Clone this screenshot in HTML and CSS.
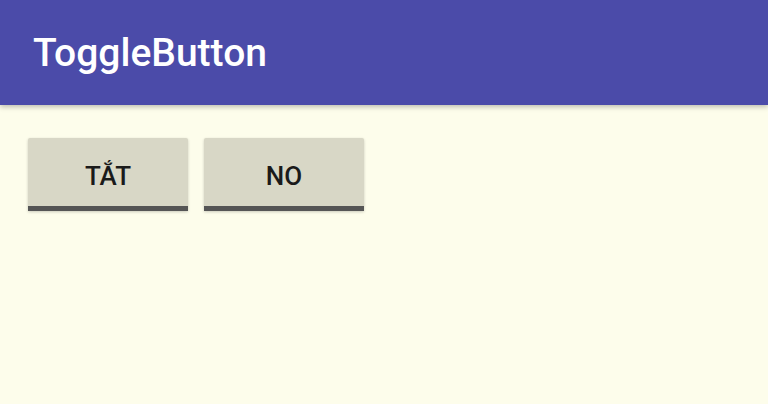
FILE: index.html
```html
<!DOCTYPE html>
<html>
<head>
<meta charset="utf-8">
<link rel="stylesheet" href="styles.css">
</head>
<body>
<header class="appbar"><h1 class="title">ToggleButton</h1></header>
<main class="content">
  <button class="toggle">TẮT</button>
  <button class="toggle">NO</button>
</main>
</body>
</html>
```
FILE: styles.css
```css
html, body { margin: 0; padding: 0; }
body {
  width: 768px; height: 404px; overflow: hidden;
  background: #fdfdeb;
  font-family: Roboto, "Noto Sans", sans-serif;
}
.appbar {
  height: 105px;
  background: #4b4ba9;
  box-shadow: 0 2px 5px rgba(0,0,0,0.25);
  display: flex; align-items: center;
  padding-left: 33px;
  position: relative;
}
.title {
  margin: 0; color: #fff; font-weight: 500; font-size: 39px;
  letter-spacing: 0; margin-top: 0;
}
.content {
  display: flex; gap: 16px;
  padding: 33px 0 0 28px;
}
.toggle {
  width: 160px; height: 73px;
  border: none; border-bottom: 5px solid #555555;
  background: #d8d7c6;
  box-shadow: 0 1px 3px rgba(0,0,0,0.2);
  font-family: Roboto, sans-serif; font-weight: 500; font-size: 26px;
  color: #1a1a1a; padding: 0; padding-top: 8px;
  border-radius: 2px 2px 0 0;
}
```
